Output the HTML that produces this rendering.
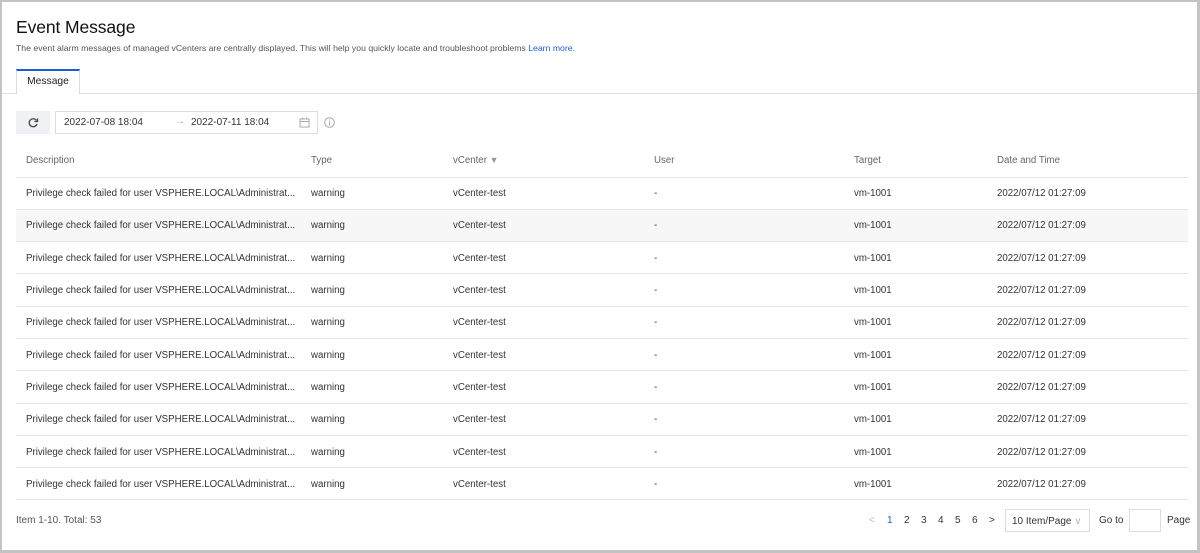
<!DOCTYPE html>
<html><head><meta charset="utf-8"><style>
*{box-sizing:border-box;margin:0;padding:0}
body{width:1200px;height:553px;overflow:hidden;background:#fff;font-family:"Liberation Sans",sans-serif;color:#333;font-size:11px;position:relative}
.frame{position:absolute;left:0;top:0;width:1200px;height:553px;border:2px solid #c4c4c4;border-right-width:3px;border-bottom-width:3px}
.abs{position:absolute;white-space:nowrap}
h1{position:absolute;left:16px;top:17px;font-size:17.5px;font-weight:normal;color:#111;letter-spacing:-0.1px}
.sub{left:16px;top:43px;font-size:8.7px;color:#555}
.sub a{color:#1b5ed8;text-decoration:none}
.tab{position:absolute;left:16px;top:69px;width:64px;height:25px;border:1px solid #ddd;border-top:2px solid #1b5ed8;border-bottom:none;background:#fff;font-size:10.3px;color:#222;text-align:center;line-height:22px;z-index:2}
.tabline{position:absolute;left:2px;right:3px;top:93px;height:1px;background:#e2e2e2}
.btn{position:absolute;left:16px;top:111px;width:34px;height:23px;background:#f0f1f4}
.date{position:absolute;left:55px;top:111px;width:263px;height:23px;border:1px solid #ddd;font-size:10px;color:#333}
table{position:absolute;left:16px;top:144px;width:1172px;border-collapse:collapse;font-size:9.7px;table-layout:fixed}
td,th{text-align:left;font-weight:normal;padding:0 0 0 10px;height:32.3px;border-bottom:1px solid #e6e6e6;white-space:nowrap;overflow:hidden}
td{padding-top:1px}
th{color:#666;height:33px;padding-top:0}
tr.g td{background:#f7f7f7}
.pg{position:absolute;top:509px;font-size:10px;color:#333}
</style></head><body>
<div class="frame"></div>
<h1>Event Message</h1>
<div class="abs sub">The event alarm messages of managed vCenters are centrally displayed. This will help you quickly locate and troubleshoot problems <a>Learn more.</a></div>
<div class="tab">Message</div>
<div class="tabline"></div>
<div class="btn"><svg width="34" height="23" viewBox="0 0 34 23"><path d="M20.5 9.5A4 4 0 1 0 21 13" fill="none" stroke="#444" stroke-width="1.3"/><path d="M21.5 7.5v3h-3" fill="none" stroke="#444" stroke-width="1.3"/></svg></div>
<div class="date">
<span class="abs" style="left:8px;top:5px">2022-07-08 18:04</span>
<span class="abs" style="left:119px;top:4px;color:#aaa">→</span>
<span class="abs" style="left:135px;top:5px">2022-07-11 18:04</span>
<svg class="abs" style="left:243px;top:5px" width="11" height="11" viewBox="0 0 11 11"><rect x="1" y="2" width="9" height="8" fill="none" stroke="#aaa"/><path d="M1 4.5h9M3.5 0.5v2M7.5 0.5v2" stroke="#aaa"/></svg>
</div>
<svg class="abs" style="left:324px;top:117px" width="11" height="11" viewBox="0 0 11 11"><circle cx="5.5" cy="5.5" r="4.8" fill="none" stroke="#aaa"/><path d="M5.5 4.5v4M5.5 2.5v1" stroke="#aaa"/></svg>
<table>
<colgroup><col style="width:285px"><col style="width:142px"><col style="width:201px"><col style="width:200px"><col style="width:143px"><col></colgroup>
<tr><th>Description</th><th>Type</th><th>vCenter <span style="color:#999;font-size:9px">▼</span></th><th>User</th><th>Target</th><th>Date and Time</th></tr>
<tr><td>Privilege check failed for user VSPHERE.LOCAL\Administrat...</td><td>warning</td><td>vCenter-test</td><td>-</td><td>vm-1001</td><td>2022/07/12 01:27:09</td></tr>
<tr class="g"><td>Privilege check failed for user VSPHERE.LOCAL\Administrat...</td><td>warning</td><td>vCenter-test</td><td>-</td><td>vm-1001</td><td>2022/07/12 01:27:09</td></tr>
<tr><td>Privilege check failed for user VSPHERE.LOCAL\Administrat...</td><td>warning</td><td>vCenter-test</td><td>-</td><td>vm-1001</td><td>2022/07/12 01:27:09</td></tr>
<tr><td>Privilege check failed for user VSPHERE.LOCAL\Administrat...</td><td>warning</td><td>vCenter-test</td><td>-</td><td>vm-1001</td><td>2022/07/12 01:27:09</td></tr>
<tr><td>Privilege check failed for user VSPHERE.LOCAL\Administrat...</td><td>warning</td><td>vCenter-test</td><td>-</td><td>vm-1001</td><td>2022/07/12 01:27:09</td></tr>
<tr><td>Privilege check failed for user VSPHERE.LOCAL\Administrat...</td><td>warning</td><td>vCenter-test</td><td>-</td><td>vm-1001</td><td>2022/07/12 01:27:09</td></tr>
<tr><td>Privilege check failed for user VSPHERE.LOCAL\Administrat...</td><td>warning</td><td>vCenter-test</td><td>-</td><td>vm-1001</td><td>2022/07/12 01:27:09</td></tr>
<tr><td>Privilege check failed for user VSPHERE.LOCAL\Administrat...</td><td>warning</td><td>vCenter-test</td><td>-</td><td>vm-1001</td><td>2022/07/12 01:27:09</td></tr>
<tr><td>Privilege check failed for user VSPHERE.LOCAL\Administrat...</td><td>warning</td><td>vCenter-test</td><td>-</td><td>vm-1001</td><td>2022/07/12 01:27:09</td></tr>
<tr><td>Privilege check failed for user VSPHERE.LOCAL\Administrat...</td><td>warning</td><td>vCenter-test</td><td>-</td><td>vm-1001</td><td>2022/07/12 01:27:09</td></tr>
</table>
<div class="abs pg" style="left:16px;top:515px;color:#555">Item 1-10. Total: 53</div>
<div class="abs pg" style="left:869px;top:515px;color:#bbb">&lt;</div>
<div class="abs pg" style="left:887px;top:515px;color:#1b5ed8">1</div>
<div class="abs pg" style="left:904px;top:515px">2</div>
<div class="abs pg" style="left:921px;top:515px">3</div>
<div class="abs pg" style="left:938px;top:515px">4</div>
<div class="abs pg" style="left:955px;top:515px">5</div>
<div class="abs pg" style="left:972px;top:515px">6</div>
<div class="abs pg" style="left:989px;top:515px">&gt;</div>
<div class="abs" style="left:1005px;top:509px;width:85px;height:23px;border:1px solid #ddd;font-size:10px;padding:6px 0 0 6px">10 Item/Page <span style="color:#bbb">∨</span></div>
<div class="abs pg" style="left:1099px;top:515px">Go to</div>
<div class="abs" style="left:1129px;top:509px;width:32px;height:23px;border:1px solid #ddd"></div>
<div class="abs pg" style="left:1167px;top:515px">Page</div>
</body></html>
